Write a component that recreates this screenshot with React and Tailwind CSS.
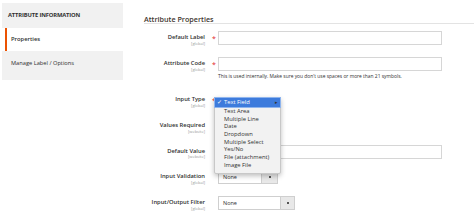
const OPTIONS = [
  "Text Area",
  "Multiple Line",
  "Date",
  "Dropdown",
  "Multiple Select",
  "Yes/No",
  "File (attachment)",
  "Image File",
];

function Label({ text, scope, required }) {
  return (
    <div className="flex w-[74px] shrink-0 items-start justify-end">
      <div className="flex flex-col items-end leading-none">
        <span className="text-[5.8px] font-semibold text-[#303030]">{text}</span>
        <span className="mt-[1px] text-[4px] text-[#9a9a9a]">[{scope}]</span>
      </div>
      <span className={`ml-[7px] w-[6px] text-[7px] leading-none ${required ? "text-[#e22626]" : "text-transparent"}`}>*</span>
    </div>
  );
}

function Select({ width, arrowW }) {
  return (
    <div className={`flex h-[14px] border border-[#cfcfcf] bg-white ${width}`}>
      <span className="flex-1 pl-[4px] text-[5.5px] leading-[12px] text-[#303030]">None</span>
      <span className={`flex items-center justify-center border-l border-[#cfcfcf] bg-[#e8e8e8] ${arrowW}`}>
        <span className="h-[2px] w-[2px] bg-[#555]" />
      </span>
    </div>
  );
}

function Row({ label, scope, required, children, note }) {
  return (
    <div className="mb-[11px] flex">
      <div className="pt-[4px]">
        <Label text={label} scope={scope} required={required} />
      </div>
      <div className="flex flex-1 flex-col">
        {children}
        {note && <div className="h-[11px] pt-[3px] text-[4.9px] leading-none text-[#303030]">{note}</div>}
      </div>
    </div>
  );
}

export default function App() {
  return (
    <div className="relative flex h-[217px] w-[474px] overflow-hidden bg-white" style={{ fontFamily: '"Open Sans", "Liberation Sans", sans-serif' }}>
      {/* sidebar */}
      <div className="ml-[2px] mt-[3px] flex h-[77px] w-[121px] flex-col bg-[#f1f1f1]">
        <div className="flex h-[25px] items-center pl-[6px] text-[5.8px] font-bold tracking-tight text-[#303030]">
          ATTRIBUTE INFORMATION
        </div>
        <div className="flex h-[23px] items-center bg-white pl-[3px]">
          <div className="flex h-full items-center border-l-[2px] border-[#eb5202] pl-[4px] text-[5.8px] font-semibold text-[#303030]">
            Properties
          </div>
        </div>
        <div className="h-[29px] pb-[5px]">
          <div className="flex h-full items-center pl-[9px] text-[5.7px] text-[#303030]">
            Manage Label / Options
          </div>
        </div>
      </div>

      {/* main */}
      <div className="ml-[21px] flex flex-1 flex-col">
        <div className="mt-[16px] h-[13px] border-b border-[#e3e3e3] text-[7.2px] font-semibold leading-none text-[#41362f]">
          Attribute Properties
        </div>
        <div className="mt-[7px] flex flex-col">
          <Row label="Default Label" scope="global" required>
            <div className="h-[14px] w-[224px] border border-[#d6d6d6] bg-white" />
          </Row>
          <Row
            label="Attribute Code"
            scope="global"
            required
            note="This is used internally. Make sure you don't use spaces or more than 21 symbols."
          >
            <div className="h-[14px] w-[224px] border border-[#d6d6d6] bg-white" />
          </Row>
          <Row label="Input Type" scope="global" required>
            <div className="h-[14px]" />
          </Row>
          <Row label="Values Required" scope="website">
            <Select width="w-[60px]" arrowW="w-[16px]" />
          </Row>
          <Row label="Default Value" scope="website">
            <div className="h-[14px] w-[224px] border border-[#d6d6d6] bg-white" />
          </Row>
          <Row label="Input Validation" scope="global">
            <Select width="w-[60px]" arrowW="w-[16px]" />
          </Row>
          <Row label="Input/Output Filter" scope="global">
            <Select width="w-[77px]" arrowW="w-[14px]" />
          </Row>
        </div>
      </div>

      {/* open dropdown list */}
      <div className="absolute left-[214px] top-[97px] flex w-[67px] flex-col rounded-[2px] border border-[#c8c8c8] bg-[#f2f2f2] pb-[3px] shadow-[0_2px_5px_rgba(0,0,0,0.25)]">
        <div className="mb-[1px] flex h-[9px] items-center bg-[#3d7bdc] pl-[2px] text-[5.8px] text-white ring-1 ring-[#8fb5ee]">
          <span className="w-[7px]">✓</span>
          <span>Text Field</span>
          <span className="ml-auto mr-[2px] text-[5px] text-[#333]">▸</span>
        </div>
        {OPTIONS.map((o) => (
          <div key={o} className="h-[7.7px] pl-[9px] text-[5.8px] leading-[7.7px] text-[#303030]">
            {o}
          </div>
        ))}
      </div>
    </div>
  );
}
